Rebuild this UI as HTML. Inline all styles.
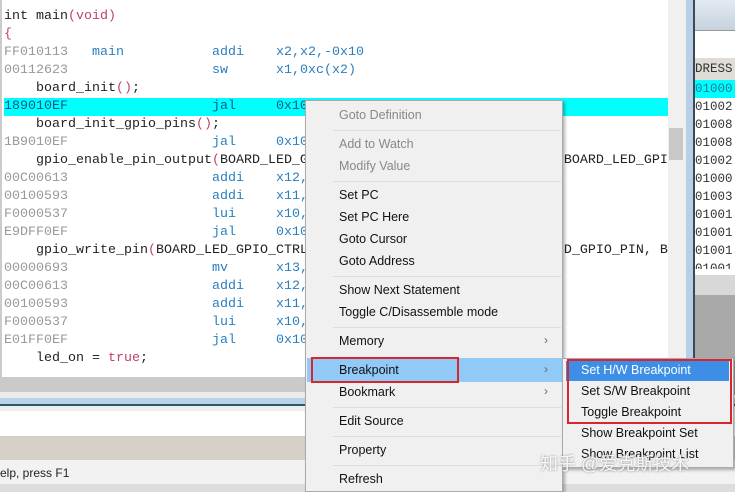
<!DOCTYPE html>
<html><head><meta charset="utf-8"><style>
*{margin:0;padding:0;box-sizing:border-box}
body{width:735px;height:492px;overflow:hidden;position:relative;background:#fff;font-family:"Liberation Sans",sans-serif}
.a{position:absolute}
.code{font-family:"Liberation Mono",monospace;font-size:13.33px;white-space:pre;line-height:18px}
.g{color:#999}.b{color:#2a7fc0}.k{color:#222}.p{color:#c04070}
.mi{position:absolute;left:339px;font-size:12.5px;color:#111}
.dis{color:#888}
.sep{position:absolute;left:333px;width:228px;height:1px;background:#ddd}
.arr{position:absolute;left:544px;font-size:12px;color:#666}
.si{position:absolute;left:581px;font-size:12.5px;color:#111}
</style></head><body>
<div class="a code" style="left:4px;top:8px;width:664px;height:369px;overflow:hidden"><div><span class="k">int main</span><span class="p">(void)</span></div><div class="p">{</div><div><span class="g">FF010113</span>   <span class="b">main           addi    x2,x2,-0x10</span></div><div><span class="g">00112623</span>                  <span class="b">sw      x1,0xc(x2)</span></div><div class="k">    board_init<span class="p">()</span>;</div><div style="background:#00ffff;margin-left:-4px;padding-left:4px;color:#0a5a8a">189010EF                  jal     0x1000</div><div class="k">    board_init_gpio_pins<span class="p">()</span>;</div><div><span class="g">1B9010EF</span>                  <span class="b">jal     0x10</span></div><div class="k">    gpio_enable_pin_output<span class="p">(</span>BOARD_LED_GPIO_CTRL,                       BOARD_LED_GPI</div><div><span class="g">00C00613</span>                  <span class="b">addi    x12,</span></div><div><span class="g">00100593</span>                  <span class="b">addi    x11,</span></div><div><span class="g">F0000537</span>                  <span class="b">lui     x10,</span></div><div><span class="g">E9DFF0EF</span>                  <span class="b">jal     0x10</span></div><div class="k">    gpio_write_pin<span class="p">(</span>BOARD_LED_GPIO_CTRL,                               D_GPIO_PIN, B</div><div><span class="g">00000693</span>                  <span class="b">mv      x13,</span></div><div><span class="g">00C00613</span>                  <span class="b">addi    x12,</span></div><div><span class="g">00100593</span>                  <span class="b">addi    x11,</span></div><div><span class="g">F0000537</span>                  <span class="b">lui     x10,</span></div><div><span class="g">E01FF0EF</span>                  <span class="b">jal     0x10</span></div><div class="k">    led_on = <span class="p">true</span>;</div></div>
<div class="a" style="left:0;top:0;width:2px;height:377px;background:#ccc"></div>
<div class="a" style="left:668px;top:0;width:18px;height:377px;background:#f0f0f0"></div>
<div class="a" style="left:669px;top:128px;width:14px;height:32px;background:#c8c8c8"></div>
<div class="a" style="left:686px;top:0;width:8px;height:395px;background:#b8cfe6"></div>
<div class="a" style="left:693px;top:0;width:2px;height:395px;background:#3a4a5a"></div>
<div class="a" style="left:695px;top:0;width:40px;height:30px;background:linear-gradient(#e4eaf0,#c6d2de)"></div>
<div class="a" style="left:695px;top:30px;width:40px;height:27px;background:#fff;border-top:1px solid #999"></div>
<div class="a code" style="left:695px;top:58px;width:40px;background:#e0ddd6;line-height:22px;font-size:12.5px;color:#333">DRESS</div>
<div class="a code" style="left:695px;top:80px;width:40px;font-size:12.5px;color:#333"><div style="background:#00ffff;color:#1a7aa0">01000</div><div>01002</div><div>01008</div><div>01008</div><div>01002</div><div>01000</div><div>01003</div><div>01001</div><div>01001</div><div>01001</div><div style="height:9px;overflow:hidden">01001</div></div>
<div class="a" style="left:695px;top:275px;width:40px;height:20px;background:#d8d8d8"></div>
<div class="a" style="left:695px;top:295px;width:40px;height:100px;background:#a9a9a9"></div>
<div class="a" style="left:0;top:377px;width:686px;height:15px;background:#cacaca"></div>
<div class="a" style="left:0;top:392px;width:686px;height:6px;background:#ececec"></div>
<div class="a" style="left:0;top:398px;width:735px;height:6px;background:#bcd2ea"></div>
<div class="a" style="left:0;top:404px;width:735px;height:2px;background:#2a5a66"></div>
<div class="a" style="left:0;top:406px;width:735px;height:5px;background:#eee"></div>
<div class="a" style="left:0;top:411px;width:735px;height:26px;background:#fff;border-bottom:1px solid #ccc"></div>
<div class="a" style="left:0;top:437px;width:735px;height:23px;background:#d5d1c9"></div>
<div class="a" style="left:0;top:460px;width:735px;height:24px;background:#f2f2f2;font-size:12px;line-height:26px;color:#222">elp, press F1</div>
<div class="a" style="left:0;top:484px;width:735px;height:8px;background:#ddd"></div>
<div class="a" style="left:305px;top:100px;width:258px;height:392px;background:#f0f0f0;border:1px solid #aaa;box-shadow:2px 2px 3px rgba(0,0,0,.3)"></div>
<div class="a" style="left:307px;top:358px;width:255px;height:24px;background:#91c9f7"></div>
<div class="a" style="left:311px;top:357px;width:148px;height:26px;border:2px solid #d9262c"></div>
<div class="mi dis" style="top:108px">Goto Definition</div>
<div class="sep" style="top:130px"></div>
<div class="mi dis" style="top:137px">Add to Watch</div>
<div class="mi dis" style="top:159px">Modify Value</div>
<div class="sep" style="top:181px"></div>
<div class="mi" style="top:188px">Set PC</div>
<div class="mi" style="top:210px">Set PC Here</div>
<div class="mi" style="top:232px">Goto Cursor</div>
<div class="mi" style="top:254px">Goto Address</div>
<div class="sep" style="top:276px"></div>
<div class="mi" style="top:283px">Show Next Statement</div>
<div class="mi" style="top:305px">Toggle C/Disassemble mode</div>
<div class="sep" style="top:327px"></div>
<div class="mi" style="top:334px">Memory</div><div class="arr" style="top:333px">›</div>
<div class="mi" style="top:363px">Breakpoint</div><div class="arr" style="top:362px">›</div>
<div class="mi" style="top:385px">Bookmark</div><div class="arr" style="top:384px">›</div>
<div class="sep" style="top:407px"></div>
<div class="mi" style="top:414px">Edit Source</div>
<div class="sep" style="top:436px"></div>
<div class="mi" style="top:443px">Property</div>
<div class="sep" style="top:465px"></div>
<div class="mi" style="top:472px">Refresh</div>
<div class="a" style="left:562px;top:358px;width:172px;height:110px;background:#f0f0f0;border:1px solid #aaa;box-shadow:2px 2px 3px rgba(0,0,0,.3)"></div>
<div class="a" style="left:566px;top:361px;width:163px;height:20px;background:#3d8ee6"></div>
<div class="a" style="left:567px;top:359px;width:165px;height:65px;border:2px solid #d9262c"></div>
<div class="si" style="top:363px;color:#fff">Set H/W Breakpoint</div>
<div class="si" style="top:384px">Set S/W Breakpoint</div>
<div class="si" style="top:405px">Toggle Breakpoint</div>
<div class="si" style="top:426px">Show Breakpoint Set</div>
<div class="si" style="top:447px">Show Breakpoint List</div>
<div class="a" style="left:540px;top:450px;font-size:18px;color:rgba(255,255,255,.9);font-family:'Liberation Sans','Noto Sans CJK SC',sans-serif;text-shadow:0 0 2px #888">知乎 @爱克斯技术</div>
</body></html>
